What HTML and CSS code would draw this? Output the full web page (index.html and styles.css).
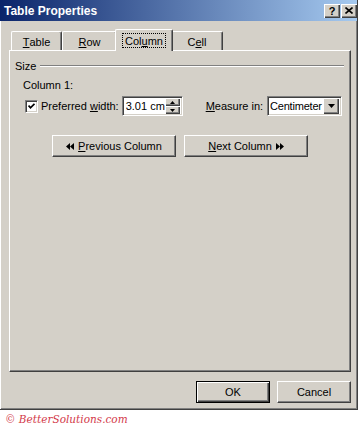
FILE: index.html
```html
<!DOCTYPE html>
<html lang="en">
<head>
  <meta charset="UTF-8">
  <title>Table Properties</title>
  <link rel="stylesheet" href="styles.css">
</head>
<body>

  <div class="dialog">
    <div class="titlebar">
      <span class="title">Table Properties</span>
      <div class="caption-buttons">
        <span class="cap-btn help">?</span>
        <span class="cap-btn close">
          <svg width="8" height="7" viewBox="0 0 8 7"><path d="M0.5 0.5 L7.5 6.5 M7.5 0.5 L0.5 6.5" stroke="#000" stroke-width="1.6" fill="none"/></svg>
        </span>
      </div>
    </div>

    <div class="client">
      <div class="tabs">
        <div class="tab tab-table"><u>T</u>able</div>
        <div class="tab tab-row"><u>R</u>ow</div>
        <div class="tab tab-column selected"><span class="focus">Col<u>u</u>mn</span></div>
        <div class="tab tab-cell">C<u>e</u>ll</div>
      </div>

      <div class="panel">
        <div class="group-head">
          <span>Size</span>
          <span class="etch"></span>
        </div>

        <div class="column-label">Column 1:</div>

        <div class="width-row">
          <span class="checkbox">
            <svg width="7" height="7" viewBox="0 0 7 7"><path d="M0.5 2.5 L2.5 4.8 L6.5 0.8" stroke="#000" stroke-width="1.8" fill="none"/></svg>
          </span>
          <span class="check-label">Preferred <u>w</u>idth:</span>
          <div class="spin-field">
            <span class="field-text">3.01 cm</span>
            <div class="spin">
              <span class="spin-btn"><svg width="5" height="3" viewBox="0 0 5 3"><path d="M2.5 0 L5 3 L0 3 Z" fill="#000"/></svg></span>
              <span class="spin-btn"><svg width="5" height="3" viewBox="0 0 5 3"><path d="M0 0 L5 0 L2.5 3 Z" fill="#000"/></svg></span>
            </div>
          </div>
          <span class="measure-label"><u>M</u>easure in:</span>
          <div class="combo">
            <span class="combo-text">Centimeter</span>
            <span class="combo-btn"><svg width="7" height="4" viewBox="0 0 7 4"><path d="M0 0 L7 0 L3.5 4 Z" fill="#000"/></svg></span>
          </div>
        </div>

        <div class="nav-row">
          <button class="btn nav-btn">
            <svg width="8" height="7" viewBox="0 0 8 7"><path d="M0 3.5 L4 0 L4 7 Z M4 3.5 L8 0 L8 7 Z" fill="#000"/></svg>
            <span><u>P</u>revious Column</span>
          </button>
          <button class="btn nav-btn">
            <span><u>N</u>ext Column</span>
            <svg width="8" height="7" viewBox="0 0 8 7"><path d="M0 0 L4 3.5 L0 7 Z M4 0 L8 3.5 L4 7 Z" fill="#000"/></svg>
          </button>
        </div>
      </div>

      <div class="footer">
        <button class="btn default">OK</button>
        <button class="btn">Cancel</button>
      </div>
    </div>
  </div>

  <div class="credit">© BetterSolutions.com</div>

</body>
</html>
```

FILE: styles.css
```css
body {
  margin: 0;
  background: #fff;
  font-family: 'Liberation Sans', Arial, sans-serif;
  font-size: 11px;
  color: #000;
}

u {
  text-decoration: underline;
  text-underline-offset: 1px;
}

.dialog {
  width: 358px;
  height: 410px;
  box-sizing: border-box;
  background: #d4d0c8;
  border-right: 1px solid #404040;
  border-bottom: 1px solid #404040;
  box-shadow: inset -1px -1px 0 #808080;
  display: flex;
  flex-direction: column;
}

/* title bar */
.titlebar {
  height: 21px;
  box-sizing: border-box;
  padding: 1px 0 0 4px;
  display: flex;
  align-items: center;
  justify-content: space-between;
  background: linear-gradient(to right, #0a246a, #a6caf0);
  color: #fff;
}

.title {
  font-weight: bold;
  font-size: 12px;
}

.caption-buttons {
  display: flex;
  gap: 1px;
}

.cap-btn {
  width: 16px;
  height: 14px;
  box-sizing: border-box;
  background: #d4d0c8;
  box-shadow: inset 1px 1px 0 #fff, inset -1px -1px 0 #404040, inset -2px -2px 0 #808080;
  color: #000;
  font-weight: bold;
  font-size: 11px;
  display: flex;
  align-items: center;
  justify-content: center;
  padding-bottom: 1px;
}

/* client area */
.client {
  flex: 1;
  padding: 8px 6px 0 9px;
  display: flex;
  flex-direction: column;
  box-shadow: inset 1px 0 0 #fff;
}

.tabs {
  height: 21px;
  padding-left: 2px;
  display: flex;
  align-items: flex-end;
  position: relative;
  z-index: 1;
}

.tab {
  height: 19px;
  box-sizing: border-box;
  padding-top: 2px;
  border-top: 1px solid #fff;
  border-left: 1px solid #fff;
  border-right: 1px solid #404040;
  box-shadow: inset -1px 0 0 #808080;
  border-radius: 2px 2px 0 0;
  background: #d4d0c8;
  display: flex;
  align-items: center;
  justify-content: center;
}

.tab-table { width: 51px; }
.tab-row { width: 55px; }
.tab-cell { width: 52px; }

.tab.selected {
  width: 58px;
  height: 22px;
  margin: 0 -2px -1px;
  padding-top: 0;
  position: relative;
  z-index: 2;
}

.focus {
  outline: 1px dotted #000;
  padding: 1px 2px 0;
}

.panel {
  height: 322px;
  box-sizing: border-box;
  border-top: 1px solid #fff;
  border-left: 1px solid #fff;
  border-right: 1px solid #404040;
  border-bottom: 1px solid #404040;
  box-shadow: inset -1px -1px 0 #808080;
  padding: 8px 6px 0 5px;
}

.group-head {
  height: 13px;
  display: flex;
  align-items: center;
  gap: 4px;
}

.etch {
  flex: 1;
  border-top: 1px solid #808080;
  border-bottom: 1px solid #fff;
}

.column-label {
  margin-top: 7px;
  padding-left: 8px;
  line-height: 13px;
}

.width-row {
  margin-top: 4px;
  height: 20px;
  padding-left: 10px;
  display: flex;
  align-items: center;
}

.checkbox {
  width: 13px;
  height: 13px;
  box-sizing: border-box;
  background: #fff;
  border: 1px solid;
  border-color: #808080 #fff #fff #808080;
  box-shadow: inset 1px 1px 0 #404040, inset -1px -1px 0 #d4d0c8;
  display: flex;
  align-items: center;
  justify-content: center;
  margin-right: 3px;
}

.spin-field,
.combo {
  height: 20px;
  box-sizing: border-box;
  background: #fff;
  border: 1px solid;
  border-color: #808080 #fff #fff #808080;
  box-shadow: inset 1px 1px 0 #404040, inset -1px -1px 0 #d4d0c8;
  padding: 2px;
  display: flex;
  align-items: center;
}

.spin-field {
  width: 61px;
  margin-left: 3px;
}

.field-text,
.combo-text {
  flex: 1;
  padding-left: 1px;
  white-space: nowrap;
}

.combo-text {
  padding-left: 0;
  letter-spacing: -0.2px;
}

.spin {
  width: 16px;
  height: 16px;
  display: flex;
  flex-direction: column;
}

.spin-btn,
.combo-btn {
  flex: 1;
  background: #d4d0c8;
  box-shadow: inset 1px 1px 0 #fff, inset -1px -1px 0 #404040, inset -2px -2px 0 #808080;
  display: flex;
  align-items: center;
  justify-content: center;
}

.measure-label {
  margin-left: 23px;
}

.combo {
  width: 75px;
  margin-left: auto;
  margin-right: 2px;
}

.combo-btn {
  flex: none;
  width: 16px;
  height: 16px;
}

.nav-row {
  margin-top: 19px;
  padding-left: 37px;
  display: flex;
  gap: 8px;
}

.btn {
  background: #d4d0c8;
  border: 1px solid;
  border-color: #fff #404040 #404040 #fff;
  box-shadow: inset -1px -1px 0 #808080;
  font: inherit;
  color: #000;
  padding: 0;
  display: flex;
  align-items: center;
  justify-content: center;
}

.nav-btn {
  width: 124px;
  height: 22px;
  gap: 4px;
}

.footer {
  margin-top: 9px;
  display: flex;
  justify-content: flex-end;
  gap: 7px;
}

.footer .btn {
  width: 74px;
  height: 22px;
}

.btn.default {
  border: 1px solid #000;
  box-shadow: inset 1px 1px 0 #fff, inset -1px -1px 0 #404040, inset -2px -2px 0 #808080;
}

.credit {
  padding: 2px 0 0 5px;
  line-height: 15px;
  font-family: 'DejaVu Serif', serif;
  font-style: italic;
  font-size: 10.5px;
  color: #d3394a;
}
```
